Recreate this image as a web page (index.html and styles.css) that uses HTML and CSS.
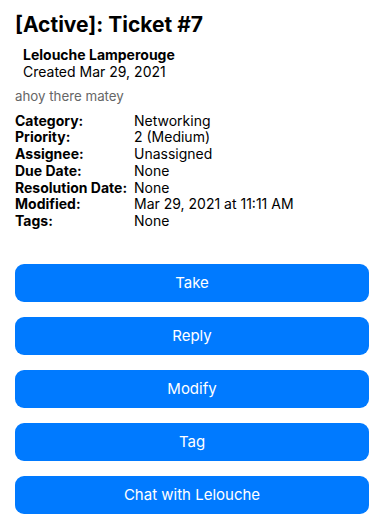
FILE: index.html
```html
<!DOCTYPE html>
<html>
<head>
<meta charset="utf-8">
<link rel="stylesheet" href="styles.css">
</head>
<body>
<div class="page">
  <h1 class="title">[Active]: Ticket #7</h1>
  <div class="author">
    <div class="author-name">Lelouche Lamperouge</div>
    <div class="author-created">Created Mar 29, 2021</div>
  </div>
  <p class="body-text">ahoy there matey</p>
  <div class="details">
    <div class="label">Category:</div><div class="value">Networking</div>
    <div class="label">Priority:</div><div class="value">2 (Medium)</div>
    <div class="label">Assignee:</div><div class="value">Unassigned</div>
    <div class="label">Due Date:</div><div class="value">None</div>
    <div class="label">Resolution Date:</div><div class="value">None</div>
    <div class="label">Modified:</div><div class="value">Mar 29, 2021 at 11:11 AM</div>
    <div class="label">Tags:</div><div class="value">None</div>
  </div>
  <div class="actions">
    <button class="btn">Take</button>
    <button class="btn">Reply</button>
    <button class="btn">Modify</button>
    <button class="btn">Tag</button>
    <button class="btn">Chat with Lelouche</button>
  </div>
</div>
</body>
</html>
```
FILE: styles.css
```css
html, body {
  margin: 0;
  padding: 0;
  background: #ffffff;
}
body {
  font-family: Inter, "Noto Sans", sans-serif;
  color: #000000;
}
.page {
  padding: 13px 19px 0 15px;
  display: flex;
  flex-direction: column;
}
.title {
  margin: 0;
  font-size: 21px;
  line-height: 24px;
  font-weight: 700;
}
.author {
  padding-left: 8px;
  margin-top: 8.5px;
}
.author-name {
  font-size: 14px;
  line-height: 17px;
  font-weight: 700;
}
.author-created {
  font-size: 14px;
  line-height: 17px;
}
.body-text {
  margin: 8px 0 0 0;
  font-size: 13.3px;
  line-height: 17px;
  color: #666666;
}
.details {
  margin-top: 8px;
  display: grid;
  grid-template-columns: 119px 1fr;
  font-size: 14px;
  line-height: 16.8px;
}
.label {
  font-weight: 700;
}
.actions {
  margin-top: 33.6px;
  display: flex;
  flex-direction: column;
  gap: 15px;
}
.btn {
  height: 38px;
  border: none;
  border-radius: 9px;
  background: #007aff;
  color: #ffffff;
  font-family: Inter, "Noto Sans", sans-serif;
  font-size: 15px;
  padding: 0;
}
```
